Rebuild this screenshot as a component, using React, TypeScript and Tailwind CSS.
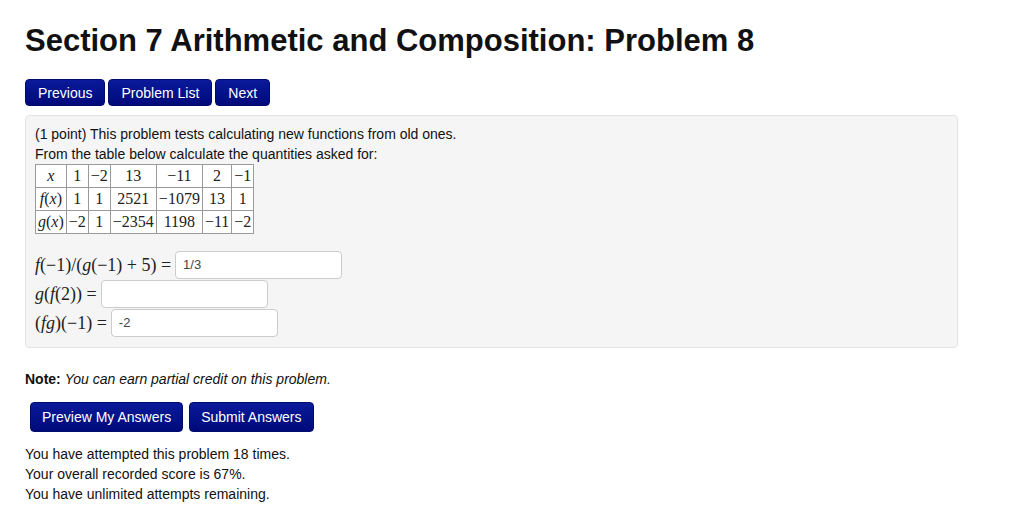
import React from 'react'

const sans = { fontFamily: '"Liberation Sans", Arial, sans-serif' }
const serif = { fontFamily: '"Liberation Serif", "Times New Roman", serif' }

const rows: string[][] = [
  ['x', '1', '−2', '13', '−11', '2', '−1'],
  ['f(x)', '1', '1', '2521', '−1079', '13', '1'],
  ['g(x)', '−2', '1', '−2354', '1198', '−11', '−2'],
]

function NavButton({ children }: { children: React.ReactNode }) {
  return (
    <button className="h-[27px] px-[12px] rounded-[4px] bg-gradient-to-b from-[#0a1a9a] to-[#00097a] border border-[#000c6a] text-white text-[14px] leading-none">
      {children}
    </button>
  )
}

function BigButton({ children }: { children: React.ReactNode }) {
  return (
    <button className="h-[30px] px-[11px] rounded-[4px] bg-gradient-to-b from-[#0a1a9a] to-[#00097a] border border-[#000c6a] text-white text-[14px] leading-none">
      {children}
    </button>
  )
}

function Cell({ v, head }: { v: string; head: boolean }) {
  const m = v.match(/^([fg])\(x\)$/)
  return (
    <td className="border border-[#9a9a9a] px-[2px] h-[23px] text-center whitespace-nowrap">
      {head ? (
        m ? (
          <span>
            <i>{m[1]}</i>(<i>x</i>)
          </span>
        ) : (
          <i>{v}</i>
        )
      ) : (
        v
      )}
    </td>
  )
}

function AnswerRow({ label, value }: { label: React.ReactNode; value: string }) {
  return (
    <div className="flex items-center h-[29px]">
      <span className="text-[18px] text-[#222] mr-[4px]" style={serif}>
        {label}
      </span>
      <div className="h-[28px] w-[167px] bg-white border border-[#cccccc] rounded-[4px] px-[7px] flex items-center text-[13px] text-[#444]">
        {value}
      </div>
    </div>
  )
}

export default function App() {
  return (
    <div className="bg-white min-h-[527px] px-[25px] text-[#111]" style={sans}>
      <h1 className="pt-[23px] text-[31px] font-bold leading-[36px]">
        Section 7 Arithmetic and Composition: Problem 8
      </h1>

      <div className="flex gap-[3px] mt-[20px]">
        <NavButton>Previous</NavButton>
        <NavButton>Problem List</NavButton>
        <NavButton>Next</NavButton>
      </div>

      <div className="mt-[9px] w-[933px] bg-[#f5f5f5] border border-[#e3e3e3] rounded-[4px] px-[9px] pt-[8px] pb-[10px] text-[14px] leading-[20px]">
        <p>(1 point) This problem tests calculating new functions from old ones.</p>
        <p>From the table below calculate the quantities asked for:</p>
        <table className="border-collapse border border-[#555] bg-white text-[16px] leading-[20px] text-[#222]" style={serif}>
          <tbody>
            {rows.map((r, i) => (
              <tr key={i}>
                {r.map((v, j) => (
                  <Cell key={j} v={v} head={j === 0} />
                ))}
              </tr>
            ))}
          </tbody>
        </table>

        <div className="mt-[16px] flex flex-col">
          <AnswerRow
            label={
              <>
                <i>f</i>(−1)/(<i>g</i>(−1) + 5) =
              </>
            }
            value="1/3"
          />
          <AnswerRow
            label={
              <>
                <i>g</i>(<i>f</i>(2)) =
              </>
            }
            value=""
          />
          <AnswerRow
            label={
              <>
                (<i>fg</i>)(−1) =
              </>
            }
            value="-2"
          />
        </div>
      </div>

      <p className="mt-[21px] text-[14px]">
        <b>Note:</b> <i>You can earn partial credit on this problem.</i>
      </p>

      <div className="flex gap-[6px] mt-[12px] ml-[5px]">
        <BigButton>Preview My Answers</BigButton>
        <BigButton>Submit Answers</BigButton>
      </div>

      <div className="mt-[12px] text-[14px] leading-[20px]">
        <p>You have attempted this problem 18 times.</p>
        <p>Your overall recorded score is 67%.</p>
        <p>You have unlimited attempts remaining.</p>
      </div>
    </div>
  )
}
